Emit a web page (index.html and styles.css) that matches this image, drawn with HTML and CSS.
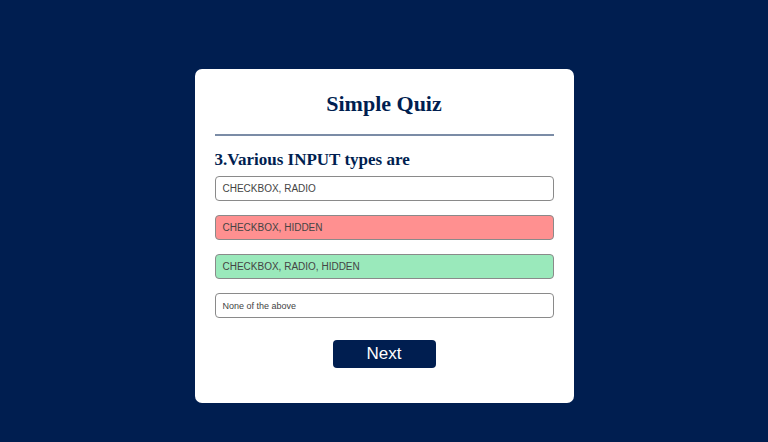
FILE: index.html
```html
<!DOCTYPE html>
<html lang="en">
<head>
  <meta charset="UTF-8">
  <meta name="viewport" content="width=device-width, initial-scale=1.0">
  <title>Simple Quiz</title>
  <link rel="stylesheet" href="styles.css">
</head>
<body>
  <div class="quiz">
    <h1>Simple Quiz</h1>
    <hr>
    <h2 class="question">3.Various INPUT types are</h2>
    <div class="answers">
      <button class="answer">CHECKBOX, RADIO</button>
      <button class="answer wrong">CHECKBOX, HIDDEN</button>
      <button class="answer correct">CHECKBOX, RADIO, HIDDEN</button>
      <button class="answer small">None of the above</button>
    </div>
    <button class="next-btn">Next</button>
  </div>
</body>
</html>
```

FILE: styles.css
```css
* {
  box-sizing: border-box;
}
body {
  margin: 0;
  padding-top: 69px;
  background: #001e50;
  font-family: "Liberation Sans", Arial, sans-serif;
  min-height: 100vh;
}
.quiz {
  width: 379px;
  height: 334px;
  margin: 0 auto;
  background: #fff;
  border-radius: 7px;
  padding: 22px 20px 35px;
}
.quiz h1 {
  margin: 0;
  font-family: "Liberation Serif", "Times New Roman", serif;
  font-size: 22px;
  line-height: 25px;
  text-align: center;
  color: #001e50;
}
.quiz hr {
  border: none;
  border-top: 2px solid #7b8ca6;
  margin: 18px 0 0;
}
.question {
  margin: 14px 0 6px;
  font-family: "Liberation Serif", "Times New Roman", serif;
  font-size: 17px;
  line-height: 20px;
  color: #001e50;
}
.answers {
  display: flex;
  flex-direction: column;
  gap: 14px;
}
.answer {
  display: block;
  width: 100%;
  height: 25px;
  text-align: left;
  padding: 0 7px;
  background: #fff;
  border: 1.5px solid #8a8a8a;
  border-radius: 4px;
  font-family: "Liberation Sans", Arial, sans-serif;
  font-size: 10px;
  color: #444;
}
.answer.small {
  font-size: 9px;
}
.answer.wrong {
  background: #ff9090;
}
.answer.correct {
  background: #9ae9bb;
}
.next-btn {
  display: block;
  margin: 22px auto 0;
  width: 103px;
  height: 28px;
  background: #001e50;
  color: #fff;
  border: none;
  border-radius: 4px;
  font-family: "Liberation Sans", Arial, sans-serif;
  font-size: 17px;
}
```
